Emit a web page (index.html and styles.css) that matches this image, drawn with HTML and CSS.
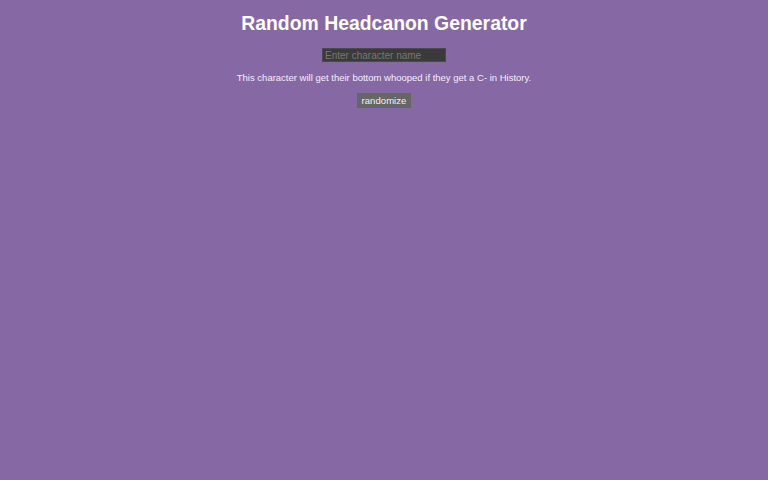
FILE: index.html
```html
<!DOCTYPE html>
<html>
<head>
<meta charset="utf-8">
<title>Random Headcanon Generator</title>
<link rel="stylesheet" href="styles.css">
</head>
<body>
<main class="page">
  <h1 class="title">Random Headcanon Generator</h1>
  <input class="name-input" type="text" placeholder="Enter character name">
  <p class="result">This character will get their bottom whooped if they get a C- in History.</p>
  <button class="randomize" type="button">randomize</button>
</main>
</body>
</html>
```
FILE: styles.css
```css
html, body {
  margin: 0;
  background: #8668a4;
}
body {
  font-family: "Liberation Sans", Arial, sans-serif;
  color: #ffffff;
}
.page {
  display: flex;
  flex-direction: column;
  align-items: center;
  padding-top: 12px;
}
.title {
  margin: 0;
  font-size: 19.4px;
  font-weight: bold;
  line-height: 22px;
}
.name-input {
  margin-top: 14px;
  width: 124px;
  height: 14px;
  box-sizing: border-box;
  padding: 0 2px;
  border: 1px solid #4a4a4a;
  background: #3a3a3a;
  color: #dddddd;
  font-family: "Liberation Sans", Arial, sans-serif;
  font-size: 10px;
  outline: none;
}
.name-input::placeholder {
  color: #777777;
}
.result {
  margin: 10px 0 0;
  font-size: 9.5px;
  line-height: 12px;
  color: #f2f0f5;
}
.randomize {
  margin-top: 9px;
  height: 15px;
  padding: 0 5px;
  border: none;
  background: #666666;
  color: #f0f0f0;
  font-family: "Liberation Sans", Arial, sans-serif;
  font-size: 9.6px;
  line-height: 15px;
}
```
